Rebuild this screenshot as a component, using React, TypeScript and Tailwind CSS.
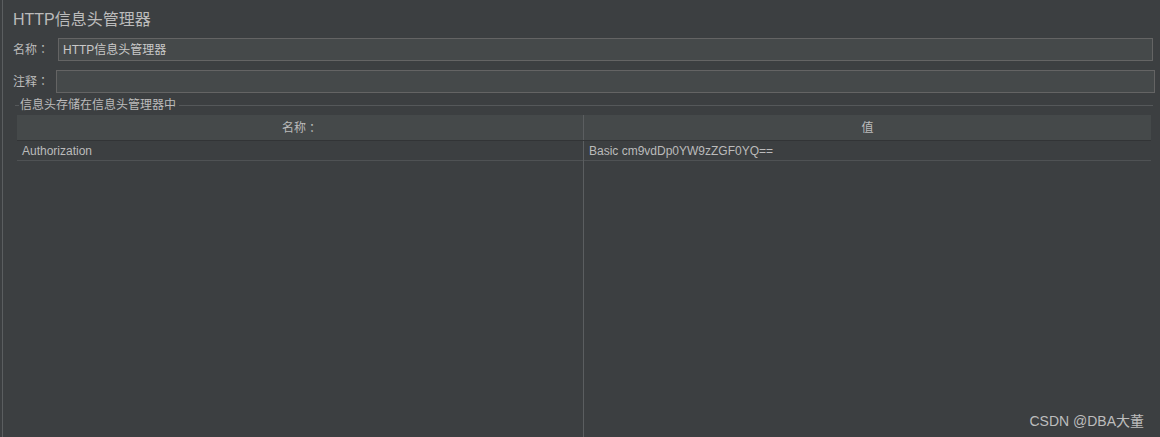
import React from 'react';

const FONT = '"Liberation Sans", "Noto Sans CJK SC", Arial, sans-serif';

// full-width colon drawn centred, as in the Swing UI
const Colon: React.FC = () => (
  <span style={{ fontFamily: '"Noto Sans CJK TC", sans-serif' }}>：</span>
);

const App: React.FC = () => {
  return (
    <div
      className="relative w-[1160px] h-[437px] overflow-hidden bg-[#3c3f41] text-[#bbbbbb] flex"
      style={{ fontFamily: FONT }}
    >
      <div className="w-[2px] flex-shrink-0" />
      <div className="flex-1 flex flex-col border-l border-[#5b5e60] pl-[10px]">
        <div className="h-[30px] pt-[10px] text-[16px] leading-[20px]">HTTP信息头管理器</div>

        <div className="mt-[8px] h-[23px] flex items-center">
          <span className="w-[45px] text-[12px]">名称<Colon /></span>
          <div className="w-[1095px] h-[23px] bg-[#45494a] border border-[#646464] flex items-center px-[4px] text-[12px] text-[#c8c8c8]">
            HTTP信息头管理器
          </div>
        </div>

        <div className="mt-[9px] h-[23px] flex items-center">
          <span className="w-[43px] text-[12px]">注释<Colon /></span>
          <div className="w-[1099px] h-[23px] bg-[#45494a] border border-[#646464]" />
        </div>

        <div className="mt-[6px] ml-[2px] w-[1138px] flex-1 flex flex-col">
          <div className="h-[13px] flex items-center">
            <div className="w-[4px] h-px bg-[#55585a]" />
            <span className="px-[1px] text-[12px] leading-[13px]">信息头存储在信息头管理器中</span>
            <div className="flex-1 h-px bg-[#55585a] ml-[2px]" />
          </div>

          <div className="mt-[3px] mx-[2px] flex-1 flex flex-col">
            <div className="h-[26px] flex bg-[#45494a] border-b border-[#323436] text-[12px]">
              <div className="w-[567px] flex items-center justify-center border-r border-[#5b5e60]">名称<Colon /></div>
              <div className="flex-1 flex items-center justify-center">值</div>
            </div>
            <div className="flex-1 flex">
              <div className="w-[567px] border-r border-[#5b5e60] flex flex-col">
                <div className="h-[20px] flex items-center pl-[5px] border-b border-[#4f5254] text-[12px]">Authorization</div>
              </div>
              <div className="flex-1 flex flex-col">
                <div className="h-[20px] flex items-center pl-[5px] border-b border-[#4f5254] text-[12px]">Basic cm9vdDp0YW9zZGF0YQ==</div>
              </div>
            </div>
          </div>
        </div>
      </div>

      <div className="absolute right-[16px] bottom-[8px] text-[14px] leading-[16px] text-[#bdbdbd]">CSDN @DBA大董</div>
    </div>
  );
};

export default App;
